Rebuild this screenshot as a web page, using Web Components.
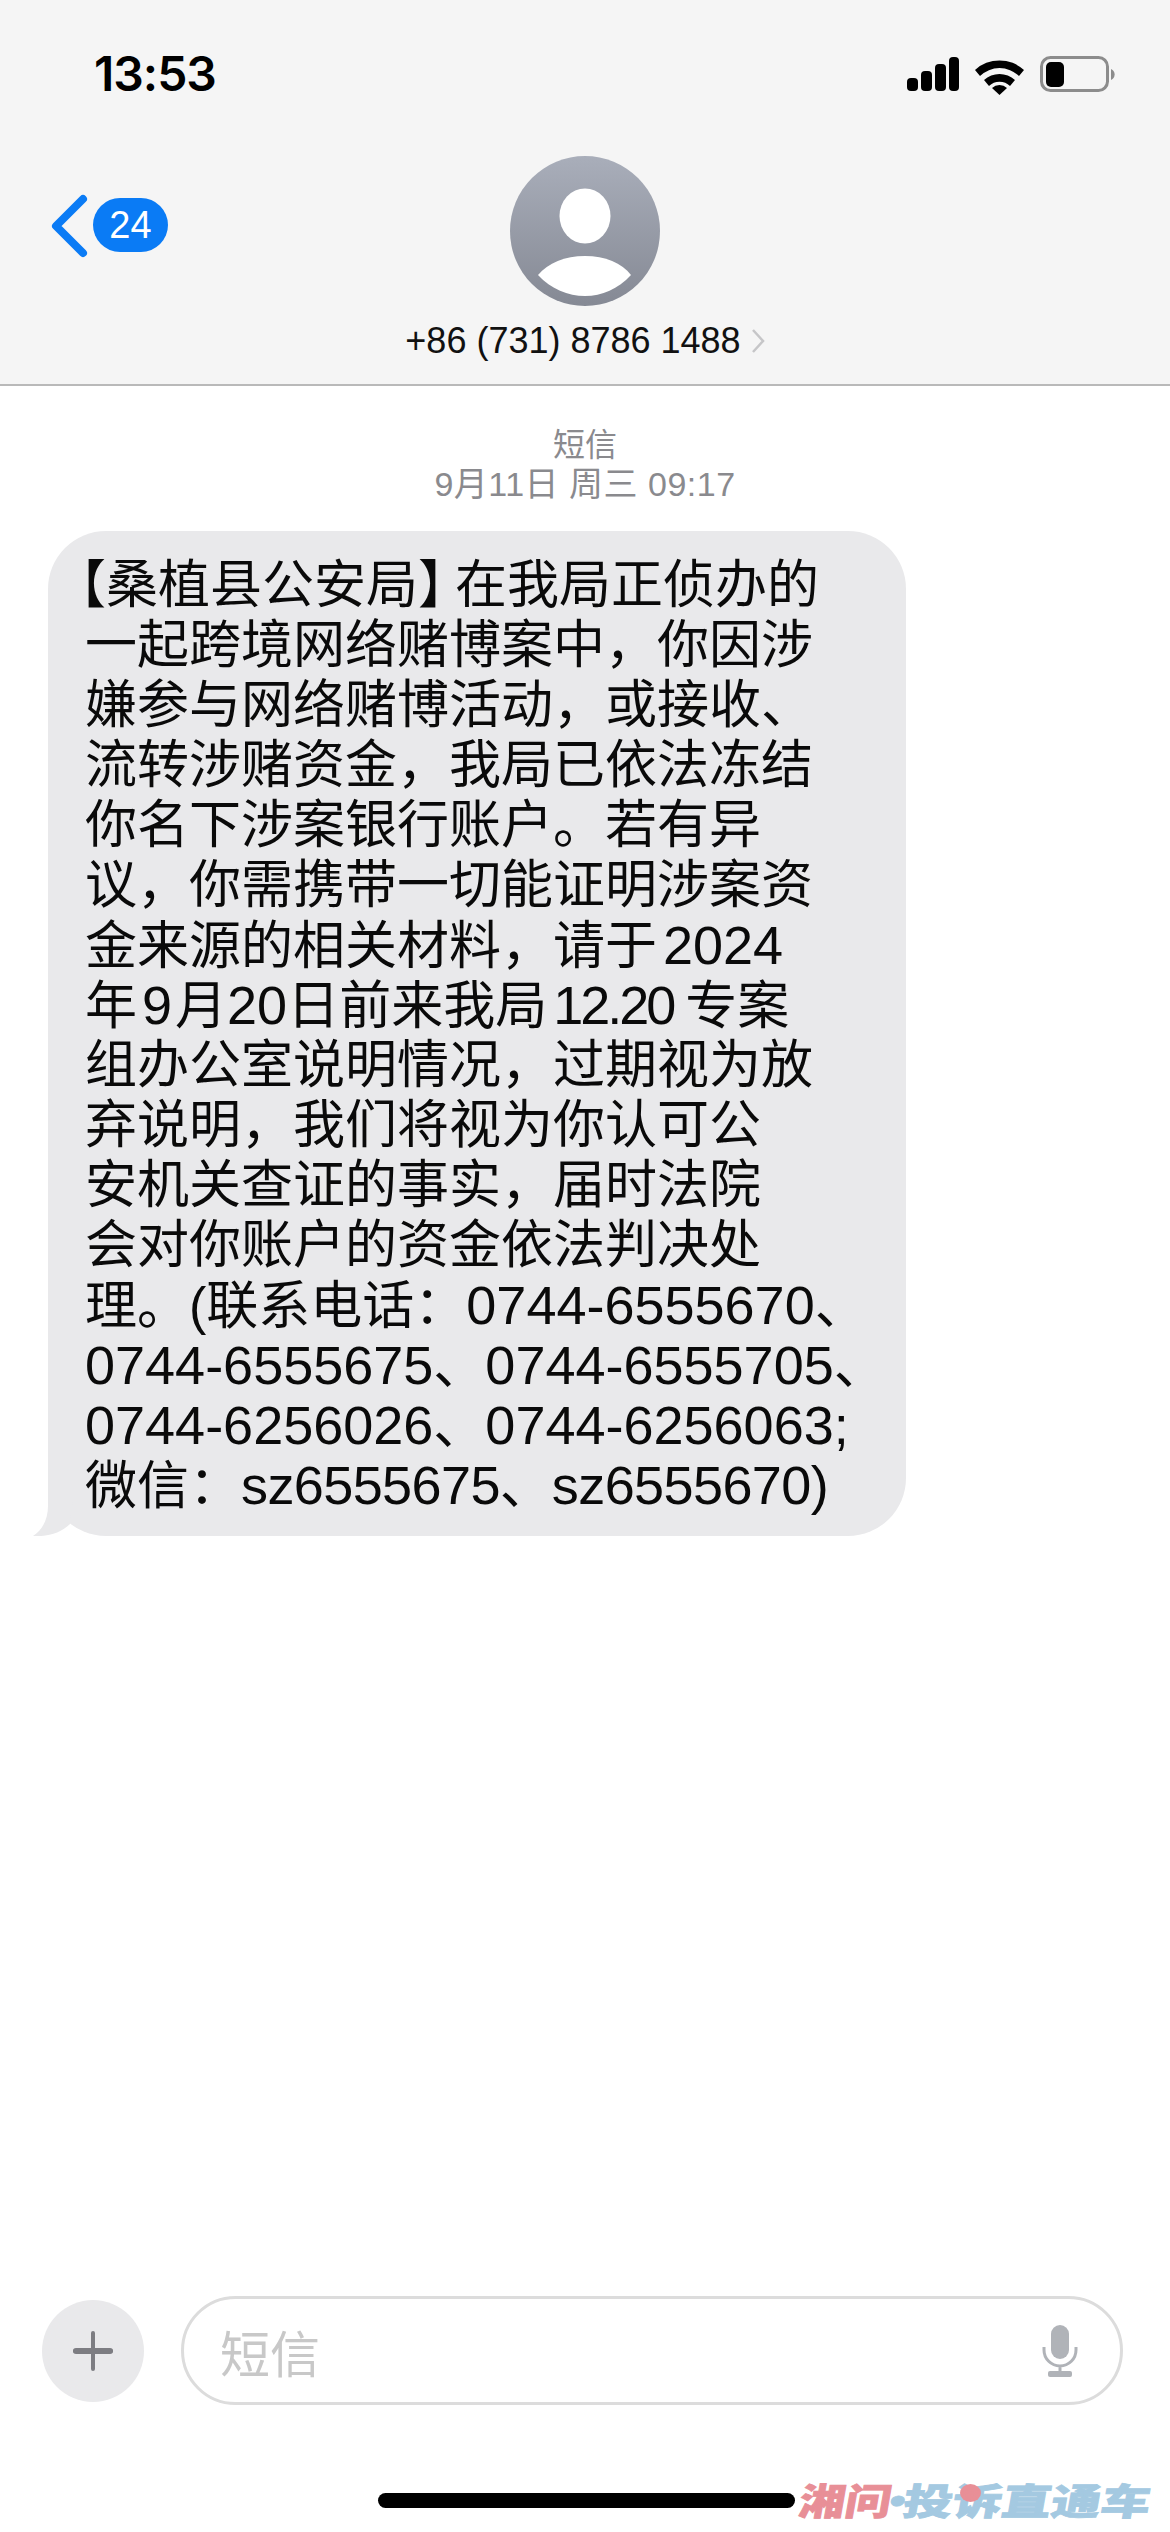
<!DOCTYPE html>
<html lang="zh">
<head>
<meta charset="utf-8">
<title>短信</title>
<style>
  html, body { margin: 0; background: #fff; }
  body { font-family: "Liberation Sans", "Noto Sans CJK SC", sans-serif; color: #000; }
  /* digits run a bit bigger than the cjk in the message */
  .n { font-size: 54px; }
  .g { margin-left: 6px; }
  .d9 { margin: 0 3px 0 5px; }
  .d12 { margin: 0 12px 0 6px; letter-spacing: -3px; }
  .sz { letter-spacing: -.6px; }
  .lb { font-feature-settings: "halt"; margin-left: -5px; }
  .rb { font-feature-settings: "halt"; margin-right: 11px; }
</style>
</head>
<body>
<sms-screen>
  <sms-header slot="header" number="+86 (731) 8786 1488" count="24" time="13:53"></sms-header>
  <sms-meta>
    <span>短信</span>
    <span>9月11日 周三 09:17</span>
  </sms-meta>
  <sms-bubble>
    <span><span class="lb">【</span>桑植县公安局<span class="rb">】</span>在我局正侦办的</span>
    <span>一起跨境网络赌博案中，你因涉</span>
    <span>嫌参与网络赌博活动，或接收、</span>
    <span>流转涉赌资金，我局已依法冻结</span>
    <span>你名下涉案银行账户。若有异</span>
    <span>议，你需携带一切能证明涉案资</span>
    <span>金来源的相关材料，请于<span class="n g">2024</span></span>
    <span>年<span class="n d9">9</span>月<span class="n">20</span>日前来我局<span class="n d12">12.20</span>专案</span>
    <span>组办公室说明情况，过期视为放</span>
    <span>弃说明，我们将视为你认可公</span>
    <span>安机关查证的事实，届时法院</span>
    <span>会对你账户的资金依法判决处</span>
    <span>理。(联系电话：<span class="n">0744-6555670</span>、</span>
    <span><span class="n">0744-6555675</span>、<span class="n">0744-6555705</span>、</span>
    <span><span class="n">0744-6256026</span>、<span class="n">0744-6256063;</span></span>
    <span>微信：<span class="n sz">sz6555675</span>、<span class="n sz">sz6555670)</span></span>
  </sms-bubble>
  <sms-composer slot="footer" placeholder="短信"></sms-composer>
</sms-screen>

<script>
class SmsScreen extends HTMLElement {
  constructor() {
    super();
    this.attachShadow({mode: 'open'}).innerHTML = `
      <style>
        :host { display: flex; flex-direction: column; position: relative; width: 1170px; height: 2532px; overflow: hidden; background: #fff; }
        .thread { flex: 1; display: flex; flex-direction: column; }
        .home { width: 417px; height: 15px; border-radius: 8px; background: #000; margin: 88px 0 24px 378px; }
        .mark { position: absolute; left: 800px; top: 2472px; font: 900 46px/54px "Noto Sans CJK SC", sans-serif; white-space: nowrap; color: #a4c9e1; -webkit-text-stroke: 1px currentColor; transform: skewX(-10deg) scaleY(.8); }
        .mark b { color: #e88f97; font-weight: 900; }
        .mark i { font-style: normal; margin: 0 -17px; }
        .mark span { display: inline-block; transform: scaleX(1.075); transform-origin: left center; }
        .dot { position: absolute; left: 960px; top: 2484px; width: 21px; height: 18px; border-radius: 50%; background: #e88f97; }
      </style>
      <slot name="header"></slot>
      <div class="thread"><slot></slot></div>
      <slot name="footer"></slot>
      <div class="home"></div>
      <div class="mark"><b>湘问</b><i>·</i><span>投诉直通车</span></div>
      <div class="dot"></div>`;
  }
}

class SmsHeader extends HTMLElement {
  connectedCallback() {
    const root = this.attachShadow({mode: 'open'});
    root.innerHTML = `
      <style>
        :host { display: block; height: 384px; background: #f5f5f5; border-bottom: 2px solid #b9b9b9; }
        .status { height: 156px; box-sizing: border-box; padding: 49px 55px 0 94px; display: flex; justify-content: space-between; align-items: flex-start; }
        .status svg { margin-top: 7px; }
        .time { font: 600 48px/50px "Inter", "Liberation Sans", sans-serif; letter-spacing: -1px; }
        .nav { display: grid; grid-template-columns: 1fr auto 1fr; }
        .back { display: flex; gap: 5px; align-items: flex-start; padding: 38px 0 0 50px; }
        .count { margin-top: 4px; width: 75px; height: 54px; border-radius: 27px; background: #0a7bf5; color: #fff; font-size: 38px; line-height: 54px; text-align: center; }
        .contact { display: flex; flex-direction: column; align-items: center; }
        .name { margin-top: 14px; display: flex; align-items: center; gap: 10px; font-size: 36px; line-height: 42px; color: #111; }
        svg { display: block; }
      </style>
      <div class="status">
        <div class="time">${this.getAttribute('time')}</div>
        <svg width="208" height="40" viewBox="0 0 208 40">
          <g fill="#000">
            <rect x="0" y="22" width="11" height="13" rx="4"/>
            <rect x="14" y="15" width="11" height="20" rx="4"/>
            <rect x="28" y="8" width="11" height="27" rx="4"/>
            <rect x="42" y="1" width="10" height="34" rx="4"/>
            <path d="M68 14 A 36 36 0 0 1 117 14 L112 20 A 28 28 0 0 0 73 20 Z"/>
            <path d="M77 24 A 23 23 0 0 1 108 24 L103 30 A 15 15 0 0 0 82 30 Z"/>
            <path d="M85 32 A 11 11 0 0 1 100 32 L92.5 39 Z"/>
            <rect x="139" y="6" width="18" height="25" rx="5"/>
          </g>
          <rect x="134.5" y="1.5" width="66" height="33" rx="9" fill="none" stroke="#8c8c8c" stroke-width="3"/>
          <path d="M204 13 a 6 6 0 0 1 0 11 Z" fill="#8c8c8c"/>
        </svg>
      </div>
      <div class="nav">
        <div class="back">
          <svg width="38" height="64" viewBox="0 0 38 64"><path d="M33 5 L6 32 L33 59" fill="none" stroke="#0a7bf5" stroke-width="8" stroke-linecap="round" stroke-linejoin="round"/></svg>
          <span class="count">${this.getAttribute('count')}</span>
        </div>
        <div class="contact">
          <svg width="150" height="150" viewBox="0 0 150 150">
            <defs>
              <linearGradient id="av" x1="0" y1="0" x2="0" y2="1"><stop offset="0" stop-color="#a9aeba"/><stop offset="1" stop-color="#858994"/></linearGradient>
            </defs>
            <circle cx="75" cy="75" r="75" fill="url(#av)"/>
            <ellipse cx="75" cy="60" rx="25.5" ry="27.5" fill="#fff"/>
            <path d="M28 119 C 38 107 55 100 75 100 C 95 100 112 107 121 119 C 108 133 92 140 75 140 C 58 140 41 133 28 119 Z" fill="#fff"/>
          </svg>
          <div class="name">
            <span>${this.getAttribute('number')}</span>
            <svg width="14" height="26" viewBox="0 0 14 26"><path d="M2 2 L12 13 L2 24" fill="none" stroke="#c6c6c8" stroke-width="2.5"/></svg>
          </div>
        </div>
        <div></div>
      </div>`;
  }
}

class SmsMeta extends HTMLElement {
  constructor() {
    super();
    this.attachShadow({mode: 'open'}).innerHTML = `
      <style>
        :host { display: flex; flex-direction: column; align-items: center; margin-top: 40px; color: #8a8a8e; font-size: 32px; line-height: 39px; }
        ::slotted(span:last-child) { font-size: 34px; letter-spacing: .5px; }
      </style>
      <slot></slot>`;
  }
}

class SmsBubble extends HTMLElement {
  constructor() {
    super();
    this.attachShadow({mode: 'open'}).innerHTML = `
      <style>
        :host { display: block; position: relative; box-sizing: border-box; width: 858px; margin: 27px 0 0 48px; padding: 24px 20px 21px 37px; background: #e9e9eb; border-radius: 58px; font-size: 52px; line-height: 60px; color: #0a0a0a; }
        ::slotted(span) { display: block; height: 60px; white-space: nowrap; }
        svg { position: absolute; left: -15px; bottom: 0; display: block; }
      </style>
      <slot></slot>
      <svg width="50" height="60" viewBox="0 0 50 60"><path d="M15 0 V30 C 15 42 10 54 0 60 C 14 61 28 57 37 48 L40 20 Z" fill="#e9e9eb"/></svg>`;
  }
}

class SmsComposer extends HTMLElement {
  connectedCallback() {
    this.attachShadow({mode: 'open'}).innerHTML = `
      <style>
        :host { display: flex; align-items: center; gap: 37px; padding-left: 42px; }
        .plus { width: 102px; height: 102px; border-radius: 50%; background: #e9e9eb; display: flex; align-items: center; justify-content: center; }
        .field { box-sizing: border-box; width: 942px; height: 109px; border: 3px solid #dcdcdc; border-radius: 55px; padding: 0 42px 0 36px; display: flex; align-items: center; justify-content: space-between; }
        .hint { font-size: 50px; color: #c8c8c8; }
        svg { display: block; }
      </style>
      <div class="plus">
        <svg width="40" height="40" viewBox="0 0 40 40"><path d="M20 2 V38 M2 20 H38" stroke="#7d7d82" stroke-width="4" stroke-linecap="round"/><path d="M3 20 H37" stroke="#7d7d82" stroke-width="6" stroke-linecap="round"/></svg>
      </div>
      <div class="field">
        <span class="hint">${this.getAttribute('placeholder')}</span>
        <svg width="36" height="52" viewBox="0 0 36 52">
          <rect x="9" y="0" width="18" height="34" rx="9" fill="#b0b3b8"/>
          <path d="M2 22 V25 A 16 16 0 0 0 34 25 V22 M18 41 V49" fill="none" stroke="#b0b3b8" stroke-width="3"/>
          <rect x="6" y="46" width="24" height="6" rx="2" fill="#b0b3b8"/>
        </svg>
      </div>`;
  }
}

customElements.define('sms-screen', SmsScreen);
customElements.define('sms-header', SmsHeader);
customElements.define('sms-meta', SmsMeta);
customElements.define('sms-bubble', SmsBubble);
customElements.define('sms-composer', SmsComposer);
</script>
</body>
</html>
